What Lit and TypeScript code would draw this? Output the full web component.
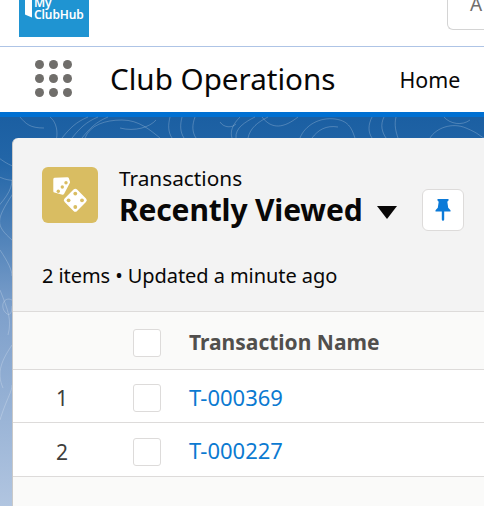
import { LitElement, html, css, svg } from "lit";
import { customElement } from "lit/decorators.js";

const contours = [
  "M-10 150 C 10 170 30 175 45 160 S 60 125 50 117",
  "M-10 170 C 10 190 28 170 12 195 S -5 225 12 240",
  "M-10 215 C 5 200 12 190 12 180",
  "M0 250 C 8 262 12 270 12 276",
  "M0 290 C 8 310 12 320 8 335",
  "M12 345 C 2 360 -4 372 3 388",
  "M12 300 C 4 296 0 306 5 312 S 12 312 12 306",
  "M0 420 C 6 400 12 392 12 385",
  "M20 117 C 26 124 30 128 44 128",
  "M85 138 C 90 125 105 120 122 120 S 150 130 160 138",
  "M62 138 C 70 128 76 122 88 117",
  "M72 138 C 80 128 86 122 98 117",
  "M82 138 C 90 128 96 122 108 117",
  "M170 117 C 168 125 168 132 172 138",
  "M182 117 C 180 125 180 132 184 138",
  "M195 117 C 192 125 192 132 196 138",
  "M240 117 C 232 125 230 132 232 138",
  "M255 117 C 245 122 235 128 236 138",
  "M268 117 C 258 122 250 128 248 138",
  "M300 138 C 305 125 320 117 335 119 S 352 130 355 138",
  "M312 138 C 318 130 326 125 338 127",
  "M372 117 C 368 125 368 132 372 138",
  "M384 117 C 380 125 382 132 386 138",
  "M396 117 C 394 125 396 132 398 138",
  "M430 138 C 436 128 452 122 466 128 S 478 135 484 138",
  "M444 117 C 450 124 462 126 470 120",
  "M262 117 C 272 130 284 128 298 117",
  "M220 122 C 224 128 232 128 236 124",
  "M120 128 C 135 132 150 127 156 120",
];

@customElement("app-root")
export class AppRoot extends LitElement {
  static styles = css`
    :host {
      display: block;
      width: 484px;
      height: 506px;
      overflow: hidden;
      position: relative;
      font-family: "Noto Sans", "Open Sans", sans-serif;
      color: #080707;
      background: #fff;
    }
    .top {
      height: 46px;
      box-sizing: content-box;
      border-bottom: 1px solid #aec4e6;
      display: flex;
      justify-content: space-between;
      align-items: flex-start;
      padding-left: 19px;
      overflow: hidden;
      background: #fff;
    }
    .logo {
      width: 70px;
      height: 37px;
      background: #1f94d2;
      position: relative;
      overflow: hidden;
    }
    .logo svg {
      position: absolute;
      left: 6px;
      top: 0;
    }
    .logo-text {
      position: absolute;
      left: 15px;
      bottom: 16px;
      color: #fff;
      font-weight: 600;
      font-size: 12px;
      line-height: 12px;
      letter-spacing: -0.1px;
      white-space: nowrap;
    }
    .search {
      width: 37px;
      height: 30px;
      box-sizing: border-box;
      border: 1px solid #d4d4d4;
      border-right: none;
      border-top: none;
      border-radius: 0 0 0 6px;
      color: #706e6b;
      font-size: 19px;
      line-height: 20px;
      padding-left: 22px;
      overflow: hidden;
    }
    .search span {
      display: block;
      margin-top: -6px;
    }
    .nav {
      height: 65px;
      display: flex;
      align-items: center;
      background: #fff;
      padding-left: 35px;
    }
    .waffle {
      display: grid;
      grid-template-columns: repeat(3, 9px);
      gap: 5px;
      width: 37px;
      margin-right: 38px;
      margin-top: -3px;
    }
    .waffle i {
      width: 9px;
      height: 9px;
      border-radius: 50%;
      background: #706e6b;
    }
    .app {
      font-size: 29.6px;
      line-height: 36px;
      margin-top: -1px;
      white-space: nowrap;
    }
    .home {
      font-size: 21.4px;
      margin-left: 64px;
      margin-top: -1px;
    }
    .stage {
      height: 394px;
      border-top: 5px solid #0070d2;
      box-sizing: border-box;
      background: linear-gradient(180deg, #1b5fa2 0%, #2366a8 12%, #7ea0cb 50%, #b1c5e0 100%);
      padding: 21px 0 0 12px;
      position: relative;
    }
    .texture {
      position: absolute;
      left: 0;
      top: -117px;
      pointer-events: none;
    }
    .card {
      position: relative;
      height: 368px;
      background: #f3f3f3;
      border-radius: 6px 0 0 0;
      border-left: 1px solid #c9c9c9;
      display: flex;
      flex-direction: column;
    }
    .head {
      height: 173px;
      box-sizing: border-box;
      flex: none;
      padding: 29px 0 0 29px;
    }
    .title-row {
      display: flex;
      align-items: flex-start;
    }
    .obj {
      width: 56px;
      height: 56px;
      border-radius: 6px;
      background: #d9bd62;
      flex: none;
      margin-right: 21px;
    }
    .crumb {
      font-size: 20.8px;
      line-height: 24px;
      margin-top: -1px;
    }
    .view {
      font-size: 30px;
      line-height: 38px;
      font-weight: 700;
      letter-spacing: -0.15px;
      display: flex;
      align-items: center;
      white-space: nowrap;
      margin-top: 1px;
    }
    .caret {
      width: 0;
      height: 0;
      border-left: 10.5px solid transparent;
      border-right: 10.5px solid transparent;
      border-top: 13px solid #080707;
      margin-left: 15px;
      margin-top: 5px;
    }
    .pin {
      width: 42px;
      height: 42px;
      box-sizing: border-box;
      border: 1px solid #dddbda;
      border-radius: 6px;
      background: #fff;
      display: flex;
      align-items: center;
      justify-content: center;
      margin: 22px 0 0 25px;
      flex: none;
    }
    .meta {
      font-size: 20px;
      line-height: 26px;
      letter-spacing: -0.07px;
      margin-top: 32px;
      white-space: nowrap;
    }
    .row {
      display: grid;
      grid-template-columns: 120px 56px 1fr;
      align-items: center;
      border-top: 1px solid #dddbda;
      flex: none;
      background: #fff;
      padding-top: 4px;
      box-sizing: border-box;
    }
    .row.th {
      height: 58px;
      background: #fafaf9;
      color: #514f4d;
      font-weight: 700;
      font-size: 21px;
    }
    .row.th .name {
      margin-top: -2px;
    }
    .row.r1 {
      height: 53px;
    }
    .row.r2 {
      height: 54px;
    }
    .num {
      padding-left: 43px;
      color: #3e3e3c;
      font-size: 21px;
    }
    .box {
      width: 28px;
      height: 28px;
      box-sizing: border-box;
      border: 1px solid #dddbda;
      border-radius: 3px;
      background: #fff;
    }
    a {
      color: #0b7ad1;
      font-size: 22px;
      line-height: 26px;
      margin-top: -3px;
      text-decoration: none;
    }
    .foot {
      flex: 1;
      border-top: 1px solid #dddbda;
      background: #fafaf9;
    }
  `;

  render() {
    return html`
      <div class="top">
        <div class="logo">
          <svg width="10" height="18" viewBox="0 0 10 18"><path d="M0 0h7v17.5l-6-2.5a1 1 0 0 1-1-1z" fill="#fff"/></svg>
          <div class="logo-text">My<br />ClubHub</div>
        </div>
        <div class="search"><span>A</span></div>
      </div>
      <div class="nav">
        <div class="waffle">${Array.from({ length: 9 }, () => html`<i></i>`)}</div>
        <div class="app">Club Operations</div>
        <div class="home">Home</div>
      </div>
      <div class="stage">
        <svg class="texture" width="484" height="506" viewBox="0 0 484 506" fill="none" stroke="#ffffff" stroke-opacity="0.22" stroke-width="1">
          ${contours.map((d) => svg`<path d=${d}></path>`)}
        </svg>
        <div class="card">
          <div class="head">
            <div class="title-row">
              <div class="obj">
                <svg width="56" height="56" viewBox="0 0 56 56">
                  <path d="M12.5 10.8 L25.3 10.2 a1.5 1.5 0 0 1 1.5 .9 l1.2 3.6 a1.5 1.5 0 0 1 -.2 1.3 L22 27 a1.5 1.5 0 0 1 -1.6 .7 L12.5 25.6 a1.5 1.5 0 0 1 -1.2 -1.4 V12.2 a1.4 1.4 0 0 1 1.2 -1.4z" fill="#fff"/>
                  <rect x="24.5" y="24.5" width="17.6" height="17.6" rx="2.5" transform="rotate(45 33.3 33.3)" fill="#fff"/>
                  <g fill="#d9bd62">
                    <circle cx="16.3" cy="24.2" r="1.7"/><circle cx="20.3" cy="20" r="1.7"/><circle cx="24" cy="15.7" r="1.7"/>
                    <circle cx="33.3" cy="26.6" r="1.9"/><circle cx="26.6" cy="33.3" r="1.9"/><circle cx="40" cy="33.3" r="1.9"/><circle cx="33.3" cy="40" r="1.9"/>
                  </g>
                </svg>
              </div>
              <div>
                <div class="crumb">Transactions</div>
                <div class="view">Recently Viewed<span class="caret"></span></div>
              </div>
              <div class="pin">
                <svg width="16" height="24" viewBox="0 0 16 24">
                  <path d="M2.5 1h11v1.5l-1.2 1.2 .9 6 2.3 2.5v1.3H.5v-1.3l2.3-2.5 .9-6L2.5 2.5z M6.8 13h2.4v8.6a1.2 1.2 0 0 1-2.4 0z" fill="#0b7ad8"/>
                </svg>
              </div>
            </div>
            <div class="meta">2 items • Updated a minute ago</div>
          </div>
          <div class="row th"><span></span><div class="box"></div><span class="name">Transaction Name</span></div>
          <div class="row r1"><span class="num">1</span><div class="box"></div><a href="#">T-000369</a></div>
          <div class="row r2"><span class="num">2</span><div class="box"></div><a href="#">T-000227</a></div>
          <div class="foot"></div>
        </div>
      </div>
    `;
  }
}
